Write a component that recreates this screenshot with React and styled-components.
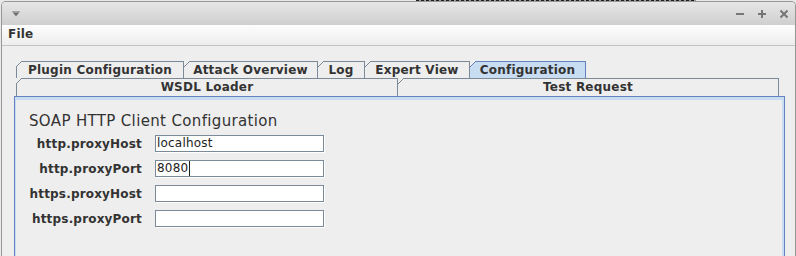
import React from 'react'
import styled, { createGlobalStyle } from 'styled-components'

const GlobalStyle = createGlobalStyle`
html, body {
    margin: 0;
    padding: 0;
}
body {
    font-family: "DejaVu Sans", "Liberation Sans", sans-serif;
    background:
        repeating-linear-gradient(90deg, #1e1e1e 0 3px, #9a9a9a 3px 5px) 416px 0 / 280px 1px no-repeat,
        #e9e9e9;
}
#root {
    width: 796px;
    height: 256px;
    overflow: hidden;
}
`

const TEXT = '#333333'
const TAB_LINE = '#7a8a99'
const BLUE_LINE = '#6382bf'
const BLUE_FILL = '#c8ddf2'
const FACE = '#eeeeee'

const topTabs = [
    { label: 'Plugin Configuration', width: 168 },
    { label: 'Attack Overview', width: 134 },
    { label: 'Log', width: 47 },
    { label: 'Expert View', width: 105 },
    { label: 'Configuration', width: 116, selected: true },
]

const subTabs = ['WSDL Loader', 'Test Request']

const fields = [
    { label: 'http.proxyHost', value: 'localhost' },
    { label: 'http.proxyPort', value: '8080', focused: true },
    { label: 'https.proxyHost', value: '' },
    { label: 'https.proxyPort', value: '' },
]

const App = () => {
    return (
        <>
            <GlobalStyle />
            <Window>
                <TitleBar>
                    <svg width="8" height="6" viewBox="0 0 8 6">
                        <path d="M0 0.5 H8 L4 5.5 Z" fill="#6e6e6e" />
                        <path d="M1.5 1.5 H6.5" stroke="#9a9a9a" strokeWidth="1" />
                    </svg>
                    <Controls>
                        <svg width="10" height="10" viewBox="0 0 10 10">
                            <path d="M1 5 H9" stroke="#767676" strokeWidth="2" />
                        </svg>
                        <svg width="10" height="10" viewBox="0 0 10 10">
                            <path d="M1 5 H9 M5 1 V9" stroke="#767676" strokeWidth="2" />
                        </svg>
                        <svg width="10" height="10" viewBox="0 0 10 10">
                            <path d="M1.5 1.5 L8.5 8.5 M8.5 1.5 L1.5 8.5" stroke="#767676" strokeWidth="2" />
                        </svg>
                    </Controls>
                </TitleBar>
                <MenuBar>
                    <MenuItem>File</MenuItem>
                </MenuBar>
                <Body>
                    <TabRow>
                        {topTabs.map((t, i) => (
                            <Tab key={t.label} $width={t.width} $first={i === 0} $selected={t.selected} $height={16}>
                                {t.label}
                            </Tab>
                        ))}
                    </TabRow>
                    <SubTabRow>
                        {subTabs.map((t, i) => (
                            <Tab key={t} $grow $first={i === 0} $height={17}>
                                {t}
                            </Tab>
                        ))}
                    </SubTabRow>
                    <Panel>
                        <Heading>SOAP HTTP Client Configuration</Heading>
                        <Form>
                            {fields.map(f => (
                                <React.Fragment key={f.label}>
                                    <Label>{f.label}</Label>
                                    <Field>
                                        {f.value}
                                        {f.focused && <Caret />}
                                    </Field>
                                </React.Fragment>
                            ))}
                        </Form>
                    </Panel>
                </Body>
            </Window>
        </>
    )
}

export default App

const Window = styled.div`
margin: 1px 0 0 1px;
width: 795px;
height: 255px;
box-sizing: border-box;
border: 1px solid #979797;
border-bottom: none;
border-radius: 5px 5px 0 0;
overflow: hidden;
display: flex;
flex-direction: column;
background: ${FACE};
`

const TitleBar = styled.div`
height: 23px;
flex: none;
display: flex;
align-items: center;
justify-content: space-between;
padding: 0 6px 0 10px;
background: linear-gradient(#e6e6e6, #cfcfcf);
`

const Controls = styled.div`
display: flex;
gap: 12px;
`

const MenuBar = styled.div`
height: 20px;
flex: none;
display: flex;
align-items: flex-start;
padding-left: 6px;
background: linear-gradient(#fdfdfd, #ededed);
border-bottom: 1px solid #c4c4c4;
`

const MenuItem = styled.div`
font-size: 12px;
font-weight: bold;
letter-spacing: 0.2px;
line-height: 19px;
color: ${TEXT};
`

const Body = styled.div`
flex: 1;
display: flex;
flex-direction: column;
padding: 15px 10px 0 12px;
`

const TabRow = styled.div`
display: flex;
margin-left: 2px;
`

const SubTabRow = styled.div`
display: flex;
margin: 0 6px 0 2px;
`

const Tab = styled.div`
position: relative;
box-sizing: border-box;
width: ${p => (p.$width ? `${p.$width}px` : 'auto')};
flex: ${p => (p.$grow ? 1 : 'none')};
height: ${p => p.$height + 1}px;
border-top: 1px solid ${p => (p.$selected ? BLUE_LINE : TAB_LINE)};
border-right: 1px solid ${p => (p.$selected ? BLUE_LINE : TAB_LINE)};
border-left: ${p => (p.$first ? `1px solid ${TAB_LINE}` : 'none')};
background: ${p => (p.$selected ? BLUE_FILL : FACE)};
font-size: 12px;
font-weight: bold;
letter-spacing: 0.22px;
line-height: ${p => p.$height}px;
text-align: center;
color: ${TEXT};
white-space: nowrap;

&::before {
    content: '';
    position: absolute;
    top: -1px;
    left: ${p => (p.$first ? '-1px' : '0')};
    width: 6px;
    height: 6px;
    background: linear-gradient(
        to bottom right,
        ${FACE} 0 calc(50% - 0.6px),
        ${p => (p.$selected ? BLUE_LINE : TAB_LINE)} calc(50% - 0.6px) calc(50% + 0.6px),
        transparent calc(50% + 0.6px)
    );
}
`

const Panel = styled.div`
height: 200px;
flex: none;
border: 1px solid ${BLUE_LINE};
background: ${FACE};
box-shadow: inset 0 3px 0 ${BLUE_FILL}, inset 1px 0 0 ${BLUE_FILL}, inset -2px 0 0 ${BLUE_FILL};
padding: 15px 0 0 14px;
`

const Heading = styled.div`
font-size: 15px;
letter-spacing: 0.35px;
line-height: 18px;
color: ${TEXT};
margin-bottom: 5px;
`

const Form = styled.div`
display: grid;
grid-template-columns: 113px 170px;
column-gap: 13px;
row-gap: 8px;
align-items: center;
`

const Label = styled.div`
font-size: 12px;
font-weight: bold;
letter-spacing: 0.18px;
color: ${TEXT};
text-align: right;
white-space: nowrap;
`

const Field = styled.div`
box-sizing: border-box;
width: 169px;
height: 17px;
border: 1px solid ${TAB_LINE};
box-shadow: 1px 1px 0 #ffffff;
background: #ffffff;
padding-left: 1px;
font-size: 12px;
letter-spacing: 0.2px;
line-height: 15px;
color: #222222;
display: flex;
align-items: center;
`

const Caret = styled.span`
display: inline-block;
width: 1px;
height: 15px;
margin-left: 1px;
background: #222222;
`
